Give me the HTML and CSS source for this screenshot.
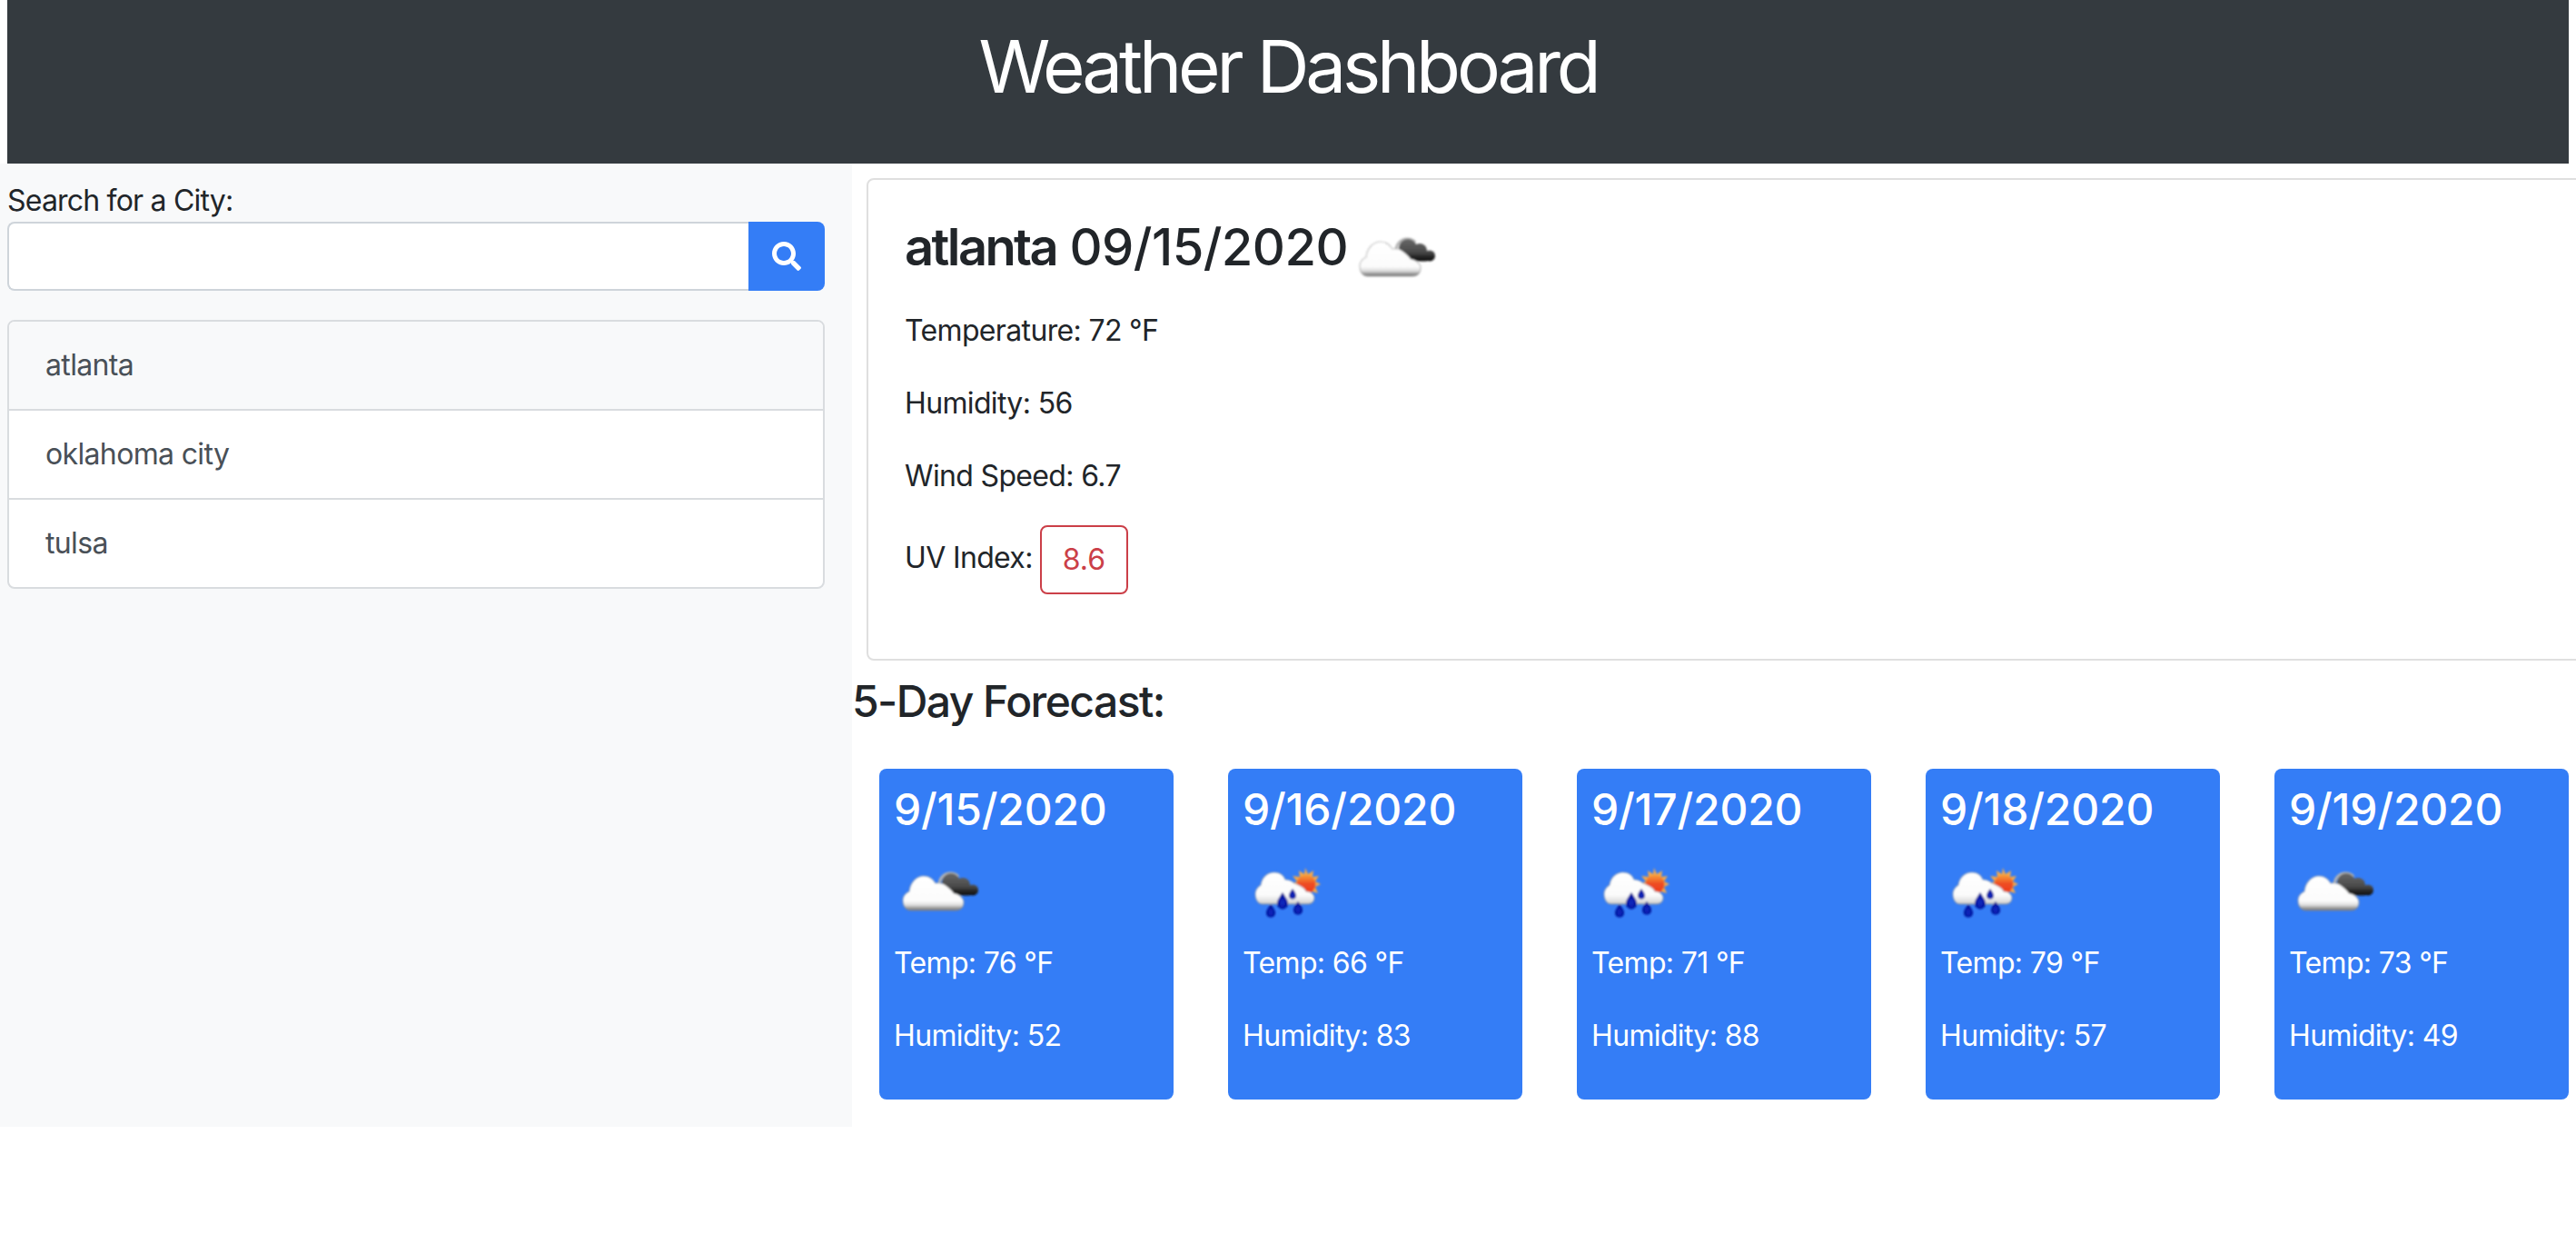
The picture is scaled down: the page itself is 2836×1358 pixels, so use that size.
FILE: index.html
```html
<!DOCTYPE html>
<html lang="en">
<head>
<meta charset="utf-8">
<title>Weather Dashboard</title>
<link rel="stylesheet" href="styles.css">
</head>
<body>
<svg class="defs" width="0" height="0" aria-hidden="true">
  <defs>
    <linearGradient id="whiteCloud" gradientUnits="userSpaceOnUse" x1="0" y1="36" x2="0" y2="75">
      <stop offset="0" stop-color="#ffffff"/>
      <stop offset="0.7" stop-color="#fcfcfc"/>
      <stop offset="0.82" stop-color="#dedede"/>
      <stop offset="0.92" stop-color="#8f8f8f"/>
      <stop offset="1" stop-color="#757575"/>
    </linearGradient>
    <linearGradient id="darkCloud" gradientUnits="userSpaceOnUse" x1="0" y1="32" x2="0" y2="58">
      <stop offset="0" stop-color="#6a6a6a"/>
      <stop offset="0.6" stop-color="#4a4a4a"/>
      <stop offset="0.85" stop-color="#1c1c1c"/>
      <stop offset="1" stop-color="#0c0c0c"/>
    </linearGradient>
    <linearGradient id="rainCloud" gradientUnits="userSpaceOnUse" x1="0" y1="32" x2="0" y2="68">
      <stop offset="0" stop-color="#ffffff"/>
      <stop offset="0.7" stop-color="#fbfbfb"/>
      <stop offset="0.9" stop-color="#dcdcdc"/>
      <stop offset="1" stop-color="#a8a8a8"/>
    </linearGradient>
    <radialGradient id="drop" cx="0.5" cy="0.62" r="0.55">
      <stop offset="0" stop-color="#1432c4"/>
      <stop offset="0.55" stop-color="#0416a8"/>
      <stop offset="1" stop-color="#05128a"/>
    </radialGradient>
    <linearGradient id="sun" x1="0" y1="0" x2="0" y2="1">
      <stop offset="0" stop-color="#f8a13a"/>
      <stop offset="0.5" stop-color="#ee4a22"/>
      <stop offset="1" stop-color="#ee3a1c"/>
    </linearGradient>
    <filter id="soft" x="-10%" y="-10%" width="120%" height="120%">
      <feGaussianBlur stdDeviation="1"/>
    </filter>
    <symbol id="icon-clouds" viewBox="0 0 100 100">
      <g filter="url(#soft)">
        <path d="M50 46c0-8 6-13 12-13 4 0 7 1 9 4" fill="none" stroke="#b4b4b4" stroke-width="3"/>
        <g fill="url(#darkCloud)">
          <circle cx="63" cy="43" r="10"/>
          <circle cx="76" cy="46" r="8"/>
          <circle cx="87" cy="51.500" r="6"/>
          <rect x="55" y="46" width="33" height="11.500" rx="5"/>
        </g>
        <path class="cloud-edge" d="M19 74C13 74 10 69 10 63C10 58 13 55 17 53C18 43 25 36 33 36C39 36 43 39 46 44C49 43 55 44 58 47C62 50 65 53 66 55C72 56 77 60 77 65C77 71 73 74 68 74Z" fill="url(#whiteCloud)"/>
      </g>
    </symbol>
    <symbol id="icon-rain" viewBox="0 0 100 100">
      <g filter="url(#soft)">
        <path d="M69 27l3 7 6-4-1 7 7-1-4 6 6 3-6 3 3 7-7-2-1 6-5-4-5 4-1-6-8 2 4-7-7-3 7-3-5-6 8 1-1-7 6 4z" fill="#f5a94a"/>
        <circle cx="70" cy="45" r="10.500" fill="url(#sun)"/>
        <path class="cloud-edge" d="M22 67C17 67 14 62 14 56C14 51 17 48 20 46C21 38 27 32 35 32C41 32 45 35 47 40C50 40 54 41 57 44C62 46 68 48 70 53C76 53 79 57 79 60C79 64 76 67 72 67Z" fill="url(#rainCloud)"/>
        <g fill="url(#drop)">
          <path d="M31 67c3 4 5 7 5 9.500 0 3-2 5-5 5s-5-2-5-5c0-2.500 2-5.500 5-9.500z"/>
          <path d="M44 54c4 6 6 9 6 12.500 0 3.500-3 6-6 6s-6-2.500-6-6c0-3.500 2-6.500 6-12.500z"/>
          <path d="M55 50c2.500 3 4 5.500 4 7.500 0 2.500-2 4-4 4s-4-1.500-4-4c0-2 1.500-4.500 4-7.500z"/>
          <path d="M61 64c3 4 5 7 5 9.500 0 3-2 5-5 5s-5-2-5-5c0-2.500 2-5.500 5-9.500z"/>
        </g>
      </g>
    </symbol>
  </defs>
</svg>

<header class="topbar">
  <h1 class="topbar-title">Weather Dashboard</h1>
</header>

<div class="layout">
  <aside class="sidebar">
    <label class="search-label" for="city">Search for a City:</label>
    <div class="search-group">
      <input class="search-input" id="city" type="text">
      <button class="search-button" type="button" aria-label="Search">
        <svg class="search-icon" viewBox="0 0 512 512"><path fill="currentColor" d="M505 442.700L405.300 343c-4.500-4.500-10.600-7-17-7H372c27.600-35.300 44-79.700 44-128C416 93.100 322.900 0 208 0S0 93.100 0 208s93.100 208 208 208c48.300 0 92.700-16.400 128-44v16.300c0 6.400 2.500 12.500 7 17l99.700 99.700c9.400 9.400 24.600 9.400 33.900 0l28.300-28.300c9.400-9.400 9.400-24.600.1-34zM208 336c-70.700 0-128-57.200-128-128 0-70.700 57.200-128 128-128 70.700 0 128 57.200 128 128 0 70.700-57.200 128-128 128z"/></svg>
      </button>
    </div>
    <ul class="city-list">
      <li class="city-item city-item-active">atlanta</li>
      <li class="city-item">oklahoma city</li>
      <li class="city-item">tulsa</li>
    </ul>
  </aside>

  <main class="content">
    <section class="current">
      <div class="current-head">
        <h2 class="current-title"><span class="current-city">atlanta</span> 09/15/2020</h2>
        <svg class="weather-icon"><use href="#icon-clouds"/></svg>
      </div>
      <p class="stat">Temperature: 72 °F</p>
      <p class="stat">Humidity: 56</p>
      <p class="stat">Wind Speed: 6.7</p>
      <div class="uv-row">
        <span class="uv-label">UV Index:</span>
        <span class="uv-value">8.6</span>
      </div>
    </section>

    <h3 class="forecast-title">5-Day Forecast:</h3>
    <div class="forecast-row">
      <article class="day">
        <h4 class="day-date">9/15/2020</h4>
        <svg class="weather-icon day-icon"><use href="#icon-clouds"/></svg>
        <p class="day-stat">Temp: 76 °F</p>
        <p class="day-stat">Humidity: 52</p>
      </article>
      <article class="day">
        <h4 class="day-date">9/16/2020</h4>
        <svg class="weather-icon day-icon"><use href="#icon-rain"/></svg>
        <p class="day-stat">Temp: 66 °F</p>
        <p class="day-stat">Humidity: 83</p>
      </article>
      <article class="day">
        <h4 class="day-date">9/17/2020</h4>
        <svg class="weather-icon day-icon"><use href="#icon-rain"/></svg>
        <p class="day-stat">Temp: 71 °F</p>
        <p class="day-stat">Humidity: 88</p>
      </article>
      <article class="day">
        <h4 class="day-date">9/18/2020</h4>
        <svg class="weather-icon day-icon"><use href="#icon-rain"/></svg>
        <p class="day-stat">Temp: 79 °F</p>
        <p class="day-stat">Humidity: 57</p>
      </article>
      <article class="day">
        <h4 class="day-date">9/19/2020</h4>
        <svg class="weather-icon day-icon"><use href="#icon-clouds"/></svg>
        <p class="day-stat">Temp: 73 °F</p>
        <p class="day-stat">Humidity: 49</p>
      </article>
    </div>
  </main>
</div>
</body>
</html>
```
FILE: styles.css
```css
* {
  box-sizing: border-box;
}

html {
  overflow: hidden;
}

body {
  margin: 0;
  background: #ffffff;
  color: #212529;
  font-family: Inter, "Liberation Sans", sans-serif;
  font-size: 32px;
  line-height: 48px;
  letter-spacing: -0.65px;
}

.defs {
  display: block;
  height: 0;
}

.cloud-edge {
  stroke: rgba(130, 130, 130, 0.5);
  stroke-width: 1.2px;
}

.topbar {
  height: 180px;
  margin: 0 8px;
  background: #343a3f;
  display: flex;
  justify-content: center;
  padding-top: 25px;
}

.topbar-title {
  margin: 0;
  color: #ffffff;
  font-size: 80px;
  font-weight: 400;
  line-height: 96px;
  letter-spacing: -4.2px;
}

.layout {
  display: flex;
  width: 100%;
  height: 1060px;
}

.sidebar {
  flex: 0 0 938px;
  background: #f8f9fa;
  padding: 17px 30px 0 8px;
}

.search-label {
  display: block;
  height: 47px;
  letter-spacing: -0.8px;
}

.search-group {
  display: flex;
  height: 76px;
}

.search-input {
  flex: 1;
  min-width: 0;
  background: #ffffff;
  border: 2px solid #ced4da;
  border-right: 0;
  border-radius: 8px 0 0 8px;
}

.search-button {
  flex: 0 0 84px;
  display: flex;
  align-items: center;
  justify-content: center;
  padding: 0;
  border: 0;
  border-radius: 0 8px 8px 0;
  background: #347df6;
  color: #ffffff;
}

.search-icon {
  width: 32px;
  height: 32px;
}

.city-list {
  margin: 32px 0 0;
  padding: 0;
  list-style: none;
  background: #ffffff;
  border: 2px solid #d9dcdf;
  border-radius: 8px;
  overflow: hidden;
}

.city-item {
  height: 96px;
  padding: 24px 40px;
  color: #495057;
}

.city-item + .city-item {
  height: 98px;
  border-top: 2px solid #d9dcdf;
}

.city-item-active {
  background: #f8f9fa;
}

.content {
  flex: 1;
  min-width: 0;
}

.current {
  width: 2000px;
  height: 531px;
  margin: 16px 0 0 16px;
  padding: 32px 40px 0;
  background: #ffffff;
  border: 2px solid #dfdfdf;
  border-radius: 8px;
}

.current-head {
  display: flex;
  align-items: flex-start;
  gap: 3px;
  height: 100px;
  margin-bottom: 8px;
}

.current-title {
  margin: 9px 0 0;
  font-size: 56px;
  font-weight: 500;
  line-height: 67px;
  letter-spacing: -0.55px;
}

.current-city {
  font-weight: 600;
  letter-spacing: -2.6px;
}

.weather-icon {
  flex: none;
  display: block;
  width: 100px;
  height: 100px;
}

.stat {
  margin: 0 0 30px;
  padding-top: 2px;
}

.uv-row {
  display: flex;
  align-items: flex-start;
  gap: 8px;
}

.uv-label {
  margin-top: 12px;
}

.uv-value {
  padding: 12px 23px;
  color: #cb3f48;
  border: 2px solid #cb3f48;
  border-radius: 8px;
  letter-spacing: 0;
}

.forecast-title {
  margin: 16px 0 0;
  font-size: 48px;
  font-weight: 500;
  line-height: 58px;
  letter-spacing: -1.55px;
}

.forecast-row {
  display: flex;
  gap: 60px;
  margin: 45px 0 0 30px;
}

.day {
  flex: 0 0 324px;
  height: 364px;
  padding: 16px;
  background: #347df6;
  color: #ffffff;
  border-radius: 8px;
}

.day-date {
  margin: 0 0 8px;
  font-size: 48px;
  font-weight: 500;
  line-height: 58px;
  letter-spacing: -0.2px;
}

.day-icon {
  margin-bottom: 6px;
}

.day-stat {
  margin: 0 0 30px;
  padding-top: 2px;
}
```
